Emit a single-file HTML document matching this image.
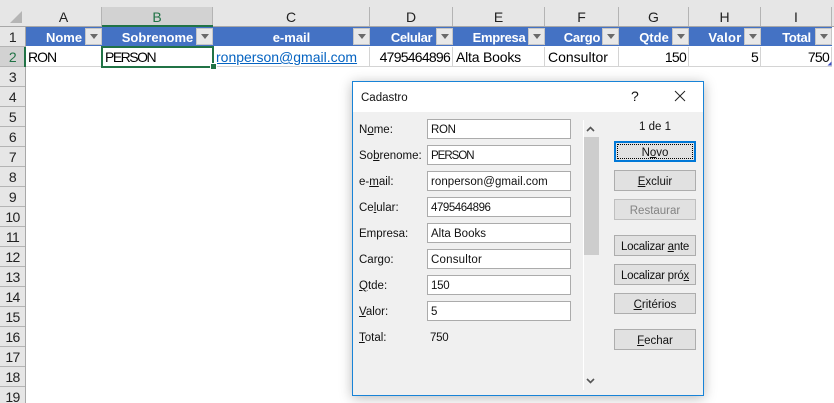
<!DOCTYPE html>
<html><head><meta charset="utf-8">
<style>
html,body{margin:0;padding:0;background:#fff;}
#p{position:relative;width:834px;height:403px;overflow:hidden;background:#fff;font-family:"Liberation Sans",sans-serif;font-size:14px;color:#000;}
#p div,#p svg{position:absolute;box-sizing:border-box;}
.ch{top:7px;height:19px;background:#e6e6e6;border-right:1px solid #b4b4b4;text-align:center;line-height:20px;color:#222;}
.rh{left:0;width:25px;height:20px;background:#e6e6e6;border-bottom:1px solid #b4b4b4;text-align:center;line-height:21px;color:#222;letter-spacing:-.6px;}
.h{top:27px;height:19px;background:#4472c4;color:#fff;font-weight:bold;font-size:13px;text-align:center;line-height:21px;}
.f{top:28px;width:17px;height:17px;background:#e8e8e8;border:1px solid #c6c6c6;}
.f:after{content:"";position:absolute;left:4px;top:5px;border-left:4px solid transparent;border-right:4px solid transparent;border-top:5px solid #6a6a6a;}
.c{top:47px;height:20px;border-right:1px solid #d4d4d4;border-bottom:1px solid #d4d4d4;line-height:21px;padding:0 3px;white-space:nowrap;}
.r{text-align:right;padding-right:2px;letter-spacing:-.75px;}
.l{left:359px;font-size:11.5px;line-height:18px;height:18px;white-space:nowrap;color:#111;}
.i{left:427px;width:144px;height:20px;background:#fff;border:1px solid #ababab;font-size:11.5px;line-height:20px;padding-left:3px;white-space:nowrap;color:#111;}
.b{left:614px;width:82px;height:21px;background:#e1e1e1;border:1px solid #adadad;font-size:11.5px;line-height:22px;text-align:center;white-space:nowrap;color:#111;}
</style></head><body><div id="p">
<div style="left:0;top:0;width:834px;height:26px;background:#e6e6e6"></div>
<div style="left:0;top:26px;width:834px;height:1px;background:#a8a8a8"></div>
<svg style="left:9px;top:10px" width="14" height="14"><polygon points="13,1 13,13 1,13" fill="#b5b5b5"/></svg>
<div class="ch" style="left:26px;width:76px">A</div>
<div class="ch" style="left:102px;width:111px;background:#d2d2d2;color:#217346">B</div>
<div class="ch" style="left:213px;width:157px">C</div>
<div class="ch" style="left:370px;width:83px">D</div>
<div class="ch" style="left:453px;width:92px">E</div>
<div class="ch" style="left:545px;width:74px">F</div>
<div class="ch" style="left:619px;width:70px">G</div>
<div class="ch" style="left:689px;width:72px">H</div>
<div class="ch" style="left:761px;width:71px">I</div>
<div style="left:102px;top:25px;width:111px;height:2px;background:#217346"></div>

<div class="rh" style="top:27px">1</div>
<div class="rh" style="top:47px;background:#d2d2d2;color:#217346">2</div>
<div class="rh" style="top:67px">3</div>
<div class="rh" style="top:87px">4</div>
<div class="rh" style="top:107px">5</div>
<div class="rh" style="top:127px">6</div>
<div class="rh" style="top:147px">7</div>
<div class="rh" style="top:167px">8</div>
<div class="rh" style="top:187px">9</div>
<div class="rh" style="top:207px">10</div>
<div class="rh" style="top:227px">11</div>
<div class="rh" style="top:247px">12</div>
<div class="rh" style="top:267px">13</div>
<div class="rh" style="top:287px">14</div>
<div class="rh" style="top:307px">15</div>
<div class="rh" style="top:327px">16</div>
<div class="rh" style="top:347px">17</div>
<div class="rh" style="top:367px">18</div>
<div class="rh" style="top:387px">19</div>
<div style="left:25px;top:26px;width:1px;height:377px;background:#a8a8a8"></div>
<div style="left:24px;top:47px;width:2px;height:20px;background:#217346"></div>

<div class="h" style="left:26px;width:76px">Nome</div>
<div class="h" style="left:102px;width:111px">Sobrenome</div>
<div class="h" style="left:213px;width:157px">e-mail</div>
<div class="h" style="left:370px;width:83px;letter-spacing:-.4px">Celular</div>
<div class="h" style="left:453px;width:92px;letter-spacing:-.3px">Empresa</div>
<div class="h" style="left:545px;width:74px;letter-spacing:-.2px">Cargo</div>
<div class="h" style="left:619px;width:70px">Qtde</div>
<div class="h" style="left:689px;width:72px;letter-spacing:.3px">Valor</div>
<div class="h" style="left:761px;width:71px;letter-spacing:-.3px">Total</div>
<div class="f" style="left:85px"></div>
<div class="f" style="left:196px"></div>
<div class="f" style="left:353px"></div>
<div class="f" style="left:436px"></div>
<div class="f" style="left:528px"></div>
<div class="f" style="left:602px"></div>
<div class="f" style="left:672px"></div>
<div class="f" style="left:744px"></div>
<div class="f" style="left:815px"></div>

<div class="c" style="left:26px;width:76px;padding-left:2px;letter-spacing:-1px">RON</div>
<div class="c" style="left:102px;width:111px;padding-left:3px;letter-spacing:-1.5px">PERSON</div>
<div class="c" style="left:213px;width:157px;color:#0563c1;overflow:visible"><span style="text-decoration:underline">ronperson@gmail.com</span></div>
<div class="c r" style="left:370px;width:83px">4795464896</div>
<div class="c" style="left:453px;width:92px;letter-spacing:-.2px">Alta Books</div>
<div class="c" style="left:545px;width:74px">Consultor</div>
<div class="c r" style="left:619px;width:70px">150</div>
<div class="c r" style="left:689px;width:72px">5</div>
<div class="c r" style="left:761px;width:71px">750</div>
<svg style="left:827px;top:61px" width="5" height="5"><polygon points="4.5,0.5 4.5,4.5 0.5,4.5" fill="#3f4fc0"/></svg>

<div style="left:101px;top:46px;width:113px;height:22px;border:2px solid #217346"></div>
<div style="left:211px;top:64px;width:5px;height:5px;background:#217346;outline:1px solid #fff"></div>

<div style="left:352px;top:81px;width:352px;height:315px;background:#f0f0f0;border:1px solid #1883d7;box-shadow:0 2px 12px rgba(0,0,0,.28)"></div>
<div style="left:353px;top:82px;width:350px;height:30px;background:#fff"></div>
<div style="left:361px;top:89px;font-size:11.5px;line-height:18px;color:#111">Cadastro</div>
<div style="left:631px;top:88px;font-size:14px;line-height:16px;color:#111">?</div>
<svg style="left:674px;top:90px" width="12" height="12"><path d="M1 1L11 11M11 1L1 11" stroke="#222" stroke-width="1" fill="none"/></svg>

<div class="l" style="top:121px">N<u>o</u>me:</div>
<div class="l" style="top:147px">So<u>b</u>renome:</div>
<div class="l" style="top:173px">e-<u>m</u>ail:</div>
<div class="l" style="top:199px">Ce<u>l</u>ular:</div>
<div class="l" style="top:225px">Empresa:</div>
<div class="l" style="top:251px">Car<u>g</u>o:</div>
<div class="l" style="top:277px"><u>Q</u>tde:</div>
<div class="l" style="top:303px"><u>V</u>alor:</div>
<div class="l" style="top:329px"><u>T</u>otal:</div>

<div class="i" style="top:119px;letter-spacing:-.3px">RON</div>
<div class="i" style="top:145px;letter-spacing:-1px">PERSON</div>
<div class="i" style="top:171px;letter-spacing:.05px">ronperson@gmail.com</div>
<div class="i" style="top:197px;letter-spacing:-.45px">4795464896</div>
<div class="i" style="top:223px">Alta Books</div>
<div class="i" style="top:249px;letter-spacing:.2px">Consultor</div>
<div class="i" style="top:275px;letter-spacing:-.3px">150</div>
<div class="i" style="top:301px">5</div>
<div class="l" style="left:430px;top:329px;letter-spacing:-.3px">750</div>

<div style="left:583px;top:120px;width:1px;height:270px;background:#fff"></div>
<div style="left:584px;top:137px;width:15px;height:118px;background:#cdcdcd"></div>
<svg style="left:586px;top:125px" width="10" height="8"><path d="M1 6L4.5 2.5L8 6" stroke="#555" stroke-width="1.6" fill="none"/></svg>
<svg style="left:586px;top:377px" width="10" height="8"><path d="M1 2L4.5 5.5L8 2" stroke="#555" stroke-width="1.6" fill="none"/></svg>

<div style="left:614px;top:118px;width:82px;text-align:center;font-size:11.5px;line-height:18px;color:#111">1 de 1</div>
<div class="b" style="top:141px;height:21px;border:2px solid #0078d7;line-height:17px"><div style="left:1px;top:1px;right:1px;bottom:1px;border:1px dotted #000;line-height:17px">N<u>o</u>vo</div></div>
<div class="b" style="top:170px"><u>E</u>xcluir</div>
<div class="b" style="top:199px;color:#838383;border-color:#bfbfbf">Restaurar</div>
<div class="b" style="top:235px;letter-spacing:-.25px">Localizar <u>a</u>nte</div>
<div class="b" style="top:264px;letter-spacing:-.25px">Localizar pró<u>x</u></div>
<div class="b" style="top:293px"><u>C</u>ritérios</div>
<div class="b" style="top:329px"><u>F</u>echar</div>
</div></body></html>
